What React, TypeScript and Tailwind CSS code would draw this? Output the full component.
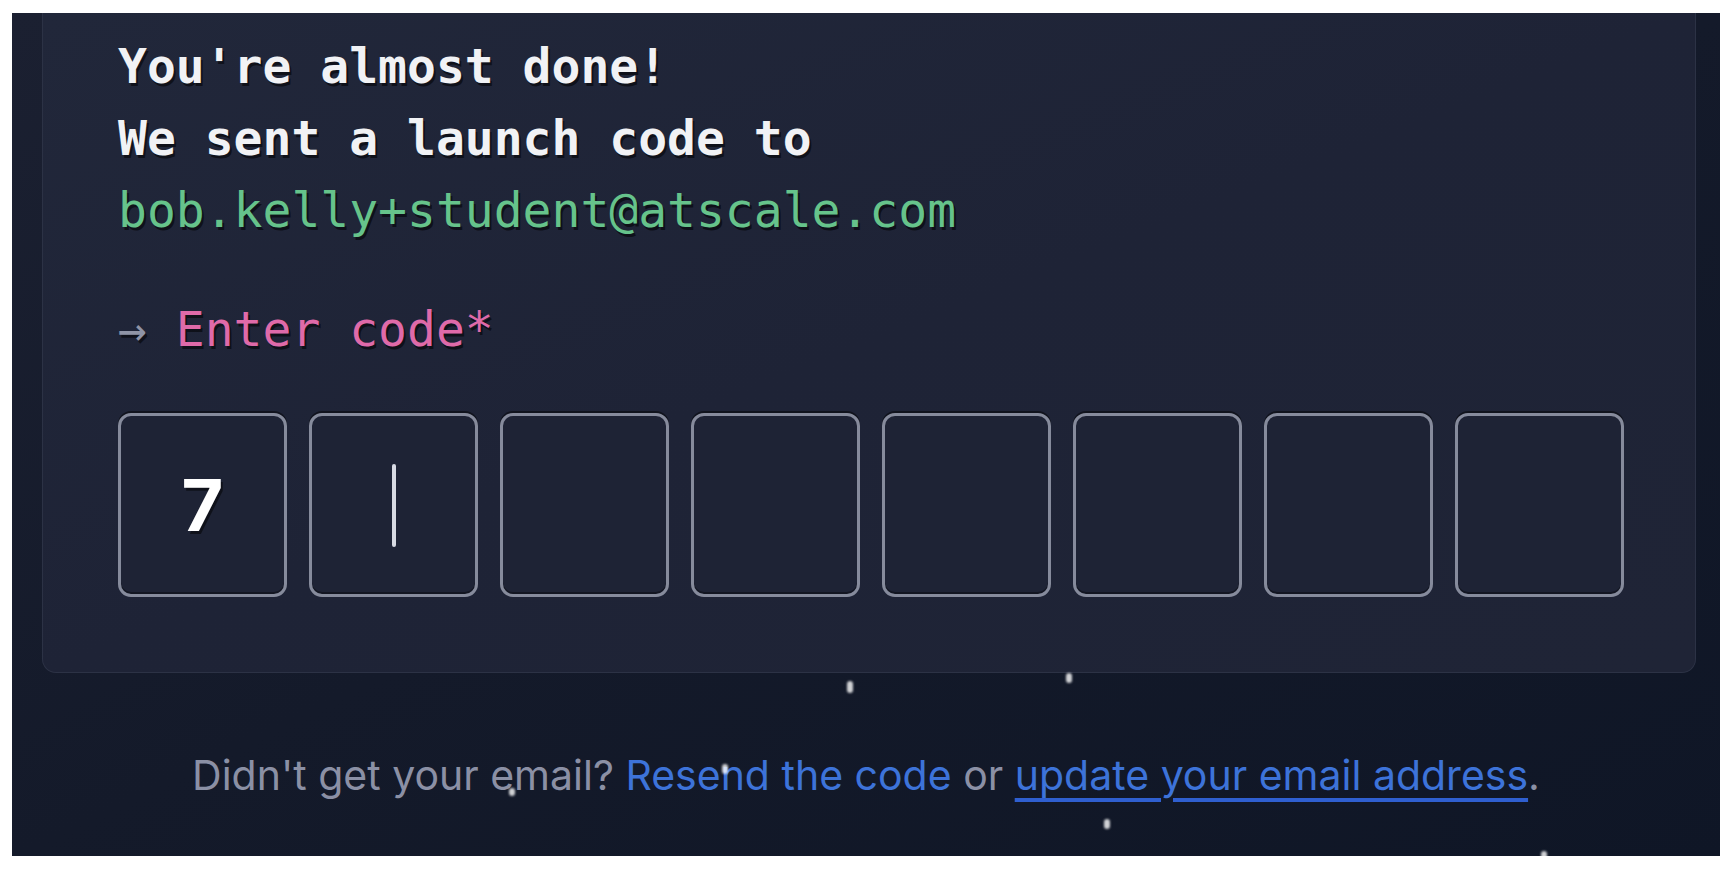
import React from "react";

const mono = "font-['DejaVu_Sans_Mono','Liberation_Mono',monospace]";

const stars = [
  { x: 835, y: 668, h: 12 },
  { x: 1054, y: 660, h: 10 },
  { x: 710, y: 751, h: 10 },
  { x: 497, y: 775, h: 8 },
  { x: 1092, y: 806, h: 10 },
  { x: 1529, y: 838, h: 8 },
];

const CodeBox: React.FC<{ value?: string; active?: boolean }> = ({ value, active }) => (
  <div className="flex h-[184px] w-[169px] items-center justify-center rounded-[13px] border-[3px] border-[#868b9c] bg-[#1e2335] shadow-[0_-2px_0_rgba(0,0,0,0.45),inset_0_-2px_0_rgba(0,0,0,0.35)]">
    {value && (
      <span className="font-['Inter',sans-serif] text-[72px] font-bold leading-none text-white [text-shadow:2px_3px_0_rgba(0,0,0,0.5)]">
        {value}
      </span>
    )}
    {active && <span className="h-[83px] w-[4px] rounded-full bg-[#d7dae3]" />}
  </div>
);

export default function App() {
  const digits = ["7", "", "", "", "", "", "", ""];

  return (
    <div className="h-[876px] w-[1736px] bg-white pb-[20px] pl-[12px] pr-[16px] pt-[13px]">
      <div className="relative flex h-full w-full flex-col overflow-hidden bg-gradient-to-br from-[#1b2031] via-[#141a2a] to-[#0f1626]">
        <div className="ml-[30px] mr-[24px] rounded-b-[14px] border-x border-b border-[#2c3245] bg-gradient-to-br from-[#21273a] via-[#1e2336] to-[#1f2436] pb-[75px] pl-[75px] pt-[17px]">
          <div className={`${mono} text-[48px] font-bold leading-[72px] [text-shadow:2px_3px_0_rgba(0,0,0,0.55)]`}>
            <div className="text-[#f1f2f5]">You're almost done!</div>
            <div className="text-[#f1f2f5]">We sent a launch code to</div>
            <div className="font-normal text-[#66c38b]">bob.kelly+student@atscale.com</div>
          </div>

          <div className={`${mono} mt-[47px] text-[48px] leading-[72px] [text-shadow:2px_3px_0_rgba(0,0,0,0.55)]`}>
            <span className="text-[#8f94a6]">→ </span>
            <span className="text-[#df6aa9]">Enter code*</span>
          </div>

          <div className="mt-[48px] flex gap-[22px]">
            {digits.map((d, i) => (
              <CodeBox key={i} value={d} active={i === 1} />
            ))}
          </div>
        </div>

        <p className="mt-[78px] text-center font-['Inter',sans-serif] text-[41px] leading-[48px] text-[#8b90a5]">
          Didn't get your email?{" "}
          <a className="text-[#3d73d9]">Resend the code</a> or{" "}
          <a className="text-[#3d73d9] underline decoration-[#2f5fd0] decoration-[4px] underline-offset-[8px]">
            update your email address
          </a>
          .
        </p>

        {stars.map((s, i) => (
          <span
            key={i}
            className="absolute w-[6px] rounded-full bg-white/80 blur-[1px]"
            style={{ left: s.x, top: s.y, height: s.h }}
          />
        ))}
      </div>
    </div>
  );
}
